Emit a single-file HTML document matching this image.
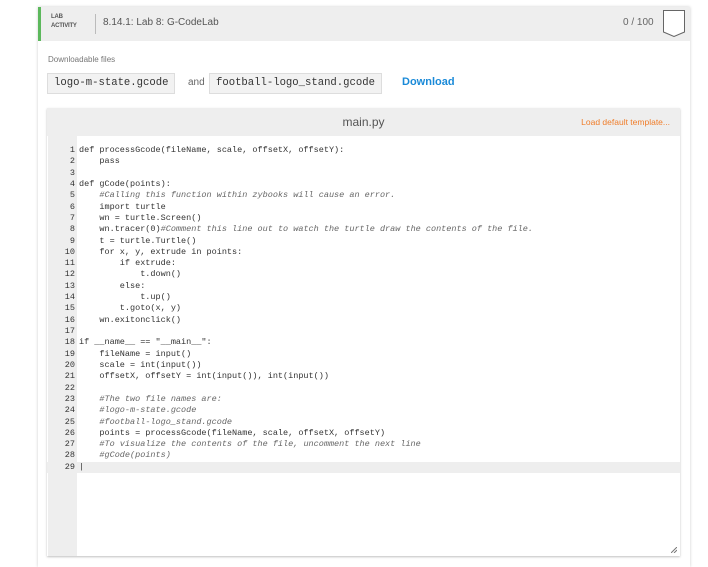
<!DOCTYPE html>
<html><head><meta charset="utf-8"><style>
*{margin:0;padding:0;box-sizing:border-box}
body{width:708px;height:564px;background:#fff;font-family:"Liberation Sans",sans-serif;position:relative;overflow:hidden}
.card{position:absolute;left:38px;top:7px;width:652px;height:560px;background:#fff;box-shadow:0 0 3px rgba(0,0,0,.2)}
.hdr{position:absolute;left:0;top:0;width:652px;height:34px;background:#eee;border-left:3px solid #5cb85c}
.lab{position:absolute;left:10px;top:6px;font-size:6px;font-weight:bold;color:#555;line-height:9px;letter-spacing:-.2px}
.sep{position:absolute;left:54px;top:7px;width:1px;height:20px;background:#bbb}
.title{position:absolute;left:62px;top:10px;font-size:10px;color:#555}
.score{position:absolute;left:582px;top:10px;font-size:10px;color:#666}
.dl{position:absolute;left:10px;top:48px;font-size:8px;color:#777}
.f{position:absolute;top:66px;height:21px;background:#f2f2f2;border:1px solid #ddd;font-family:"Liberation Mono",monospace;font-size:10.6px;line-height:19px;padding:0 6px;color:#333}
.and{position:absolute;left:150px;top:70px;font-size:10px;color:#666}
.down{position:absolute;left:364px;top:69px;font-size:11px;font-weight:bold;color:#1a8ad8}
.ed{position:absolute;left:9px;top:101px;width:633px;height:448px;background:#fff;box-shadow:0 1px 2px rgba(0,0,0,.25)}
.eh{height:28px;background:#eee;position:relative}
.eh .n{position:absolute;left:0;width:633px;text-align:center;top:7px;font-size:12px;color:#555}
.eh .l{position:absolute;right:10px;top:9px;font-size:8.5px;color:#f07d2a}
.gut{position:absolute;left:1px;top:28px;width:29px;bottom:0;background:#eee}
.code{position:absolute;left:0;top:37px;width:633px;font-family:"Liberation Mono",monospace;font-size:8.5px;line-height:11.32px;color:#333;white-space:pre}
.code div{height:11.32px;position:relative}
.code b{display:inline-block;width:28px;text-align:right;font-weight:normal;color:#333;margin-right:4px}
.code i{color:#666}
.act{background:#eee}
</style></head><body>
<div class="card">
<div class="hdr"><div class="lab">LAB<br>ACTIVITY</div><div class="sep"></div><div class="title">8.14.1: Lab 8: G-CodeLab</div><div class="score">0 / 100</div>
<svg style="position:absolute;left:622px;top:3px" width="22" height="27"><path d="M0.5 0.5H21.5V22L11 26.5L0.5 22Z" fill="#fff" stroke="#666" stroke-width="1"/></svg></div>
<div class="dl">Downloadable files</div>
<div class="f" style="left:9px">logo-m-state.gcode</div>
<div class="and">and</div>
<div class="f" style="left:171px">football-logo_stand.gcode</div>
<div class="down">Download</div>
<div class="ed">
<div class="eh"><div class="n">main.py</div><div class="l">Load default template...</div></div>
<div class="gut"></div>
<div class="code"><div><b>1</b>def processGcode(fileName, scale, offsetX, offsetY):</div><div><b>2</b>    pass</div><div><b>3</b></div><div><b>4</b>def gCode(points):</div><div><b>5</b>    <i>#Calling this function within zybooks will cause an error.</i></div><div><b>6</b>    import turtle</div><div><b>7</b>    wn = turtle.Screen()</div><div><b>8</b>    wn.tracer(0)<i>#Comment this line out to watch the turtle draw the contents of the file.</i></div><div><b>9</b>    t = turtle.Turtle()</div><div><b>10</b>    for x, y, extrude in points:</div><div><b>11</b>        if extrude:</div><div><b>12</b>            t.down()</div><div><b>13</b>        else:</div><div><b>14</b>            t.up()</div><div><b>15</b>        t.goto(x, y)</div><div><b>16</b>    wn.exitonclick()</div><div><b>17</b></div><div><b>18</b>if __name__ == "__main__":</div><div><b>19</b>    fileName = input()</div><div><b>20</b>    scale = int(input())</div><div><b>21</b>    offsetX, offsetY = int(input()), int(input())</div><div><b>22</b></div><div><b>23</b>    <i>#The two file names are:</i></div><div><b>24</b>    <i>#logo-m-state.gcode</i></div><div><b>25</b>    <i>#football-logo_stand.gcode</i></div><div><b>26</b>    points = processGcode(fileName, scale, offsetX, offsetY)</div><div><b>27</b>    <i>#To visualize the contents of the file, uncomment the next line</i></div><div><b>28</b>    <i>#gCode(points)</i></div><div class="act"><b>29</b>|</div></div>
<svg style="position:absolute;right:3px;bottom:3px" width="6" height="6"><path d="M0 6L6 0M3 6L6 3" stroke="#777" stroke-width="1"/></svg>
</div>
</div>
</body></html>
